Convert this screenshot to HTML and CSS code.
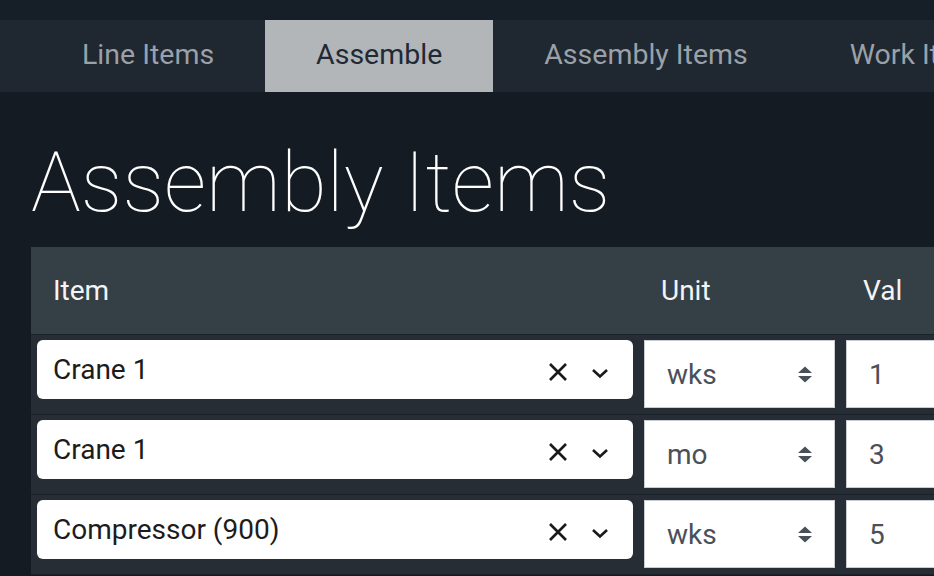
FILE: index.html
```html
<!DOCTYPE html>
<html lang="en">
<head>
  <meta charset="UTF-8" />
  <title>Assembly Items</title>
  <link rel="stylesheet" href="styles.css">
</head>
<body>
  <div class="topstrip"></div>
  <nav class="tabs">
    <a class="tab">Line Items</a>
    <a class="tab active">Assemble</a>
    <a class="tab">Assembly Items</a>
    <a class="tab">Work Items</a>
  </nav>

  <main class="page">
    <h1>Assembly Items</h1>

    <div class="grid">
      <div class="th">Item</div>
      <div class="th">Unit</div>
      <div class="th">Val</div>

      <div class="td"><div class="combo"><span class="combo-text">Crane 1</span>
        <svg class="ico-x" width="20" height="20" viewBox="0 0 20 20"><path d="M2 2L18 18M18 2L2 18" stroke="#1a1a1a" stroke-width="2.6" fill="none"/></svg>
        <svg class="ico-down" width="18" height="12" viewBox="0 0 18 12"><path d="M2 3L9 9.5L16 3" stroke="#1a1a1a" stroke-width="2.6" fill="none"/></svg>
      </div></div>
      <div class="td"><div class="select"><span>wks</span>
        <svg width="16" height="19" viewBox="0 0 16 19"><path d="M1 8L8 1.5L15 8Z M1 11L8 17.5L15 11Z" fill="#4a5057"/></svg>
      </div></div>
      <div class="td"><div class="field">1</div></div>

      <div class="td"><div class="combo"><span class="combo-text">Crane 1</span>
        <svg class="ico-x" width="20" height="20" viewBox="0 0 20 20"><path d="M2 2L18 18M18 2L2 18" stroke="#1a1a1a" stroke-width="2.6" fill="none"/></svg>
        <svg class="ico-down" width="18" height="12" viewBox="0 0 18 12"><path d="M2 3L9 9.5L16 3" stroke="#1a1a1a" stroke-width="2.6" fill="none"/></svg>
      </div></div>
      <div class="td"><div class="select"><span>mo</span>
        <svg width="16" height="19" viewBox="0 0 16 19"><path d="M1 8L8 1.5L15 8Z M1 11L8 17.5L15 11Z" fill="#4a5057"/></svg>
      </div></div>
      <div class="td"><div class="field">3</div></div>

      <div class="td"><div class="combo"><span class="combo-text">Compressor (900)</span>
        <svg class="ico-x" width="20" height="20" viewBox="0 0 20 20"><path d="M2 2L18 18M18 2L2 18" stroke="#1a1a1a" stroke-width="2.6" fill="none"/></svg>
        <svg class="ico-down" width="18" height="12" viewBox="0 0 18 12"><path d="M2 3L9 9.5L16 3" stroke="#1a1a1a" stroke-width="2.6" fill="none"/></svg>
      </div></div>
      <div class="td"><div class="select"><span>wks</span>
        <svg width="16" height="19" viewBox="0 0 16 19"><path d="M1 8L8 1.5L15 8Z M1 11L8 17.5L15 11Z" fill="#4a5057"/></svg>
      </div></div>
      <div class="td"><div class="field">5</div></div>
    </div>
  </main>
</body>
</html>
```

FILE: styles.css
```css
html, body { margin: 0; padding: 0; }
body { font-family: Roboto, "Noto Sans", sans-serif; background: #141b23; color: #fff;
       width: 934px; height: 576px; overflow: hidden; }

.topstrip { height: 20px; background: #161e27; }
.tabs { display: flex; height: 72px; background: #1f2730; padding-left: 31px; white-space: nowrap; }
.tab { display: flex; align-items: center; padding: 0 51px 4px; font-size: 28.5px; color: #9aa1a8; flex: none; }
.tab.active { background: #b3b6b9; color: #1f2a36; }

.page { padding: 0 0 0 31px; }
h1 { margin: 0; padding-top: 49px; height: 106px; font-size: 83.5px; font-weight: 100;
     line-height: 1; color: #fff; }

.grid { display: grid; grid-template-columns: 608px 202px 200px; width: 1010px; }
.th { background: #353f46; height: 87px; display: flex; align-items: center; padding-left: 22px;
      font-size: 28px; color: #f3f4f5; border-bottom: 1px solid #1b2128; }
.td { background: #262d35; height: 69px; padding: 5px 6px 5px 5px; border-bottom: 1px solid #1b2128; }
.td:nth-child(3n+1) { padding-left: 6px; }

.combo { background: #fff; border-radius: 6px; height: 59px; display: flex; align-items: center;
         padding: 0 24px 0 16px; color: #1c1c1c; font-size: 28px; }
.combo-text { flex: 1; }
.ico-x { margin-right: 23px; margin-top: 4px; }
.ico-down { margin-top: 6px; }

.select { background: #fff; border: 1px solid #c9cdd1; height: 66px; display: flex; align-items: center;
          padding: 0 21px 0 22px; color: #4a5057; font-size: 28px; justify-content: space-between; }
.field { background: #fff; border: 1px solid #c9cdd1; height: 66px; display: flex; align-items: center;
         padding: 0 22px; color: #4a5057; font-size: 28px; }
```
